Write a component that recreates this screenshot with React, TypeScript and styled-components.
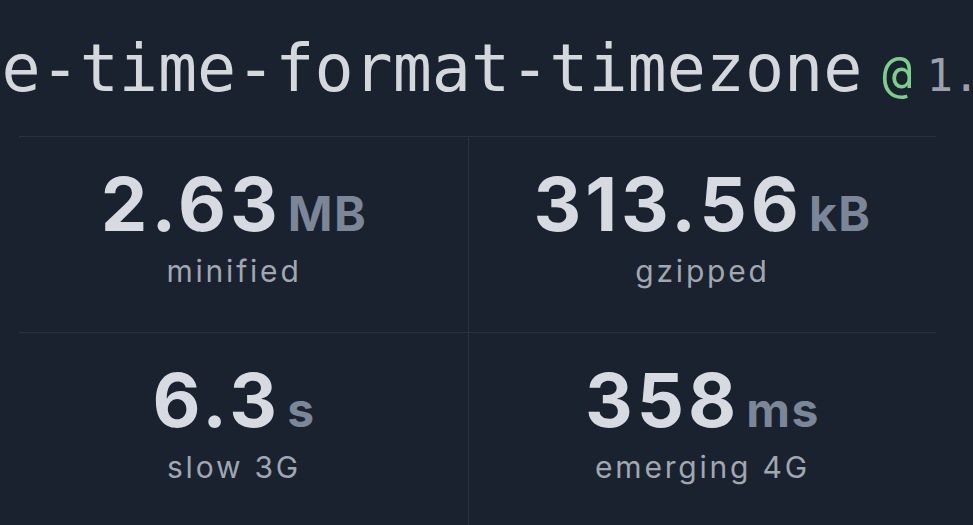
import styled, { createGlobalStyle } from "styled-components";

const GlobalStyle = createGlobalStyle`
  html, body {
    margin: 0;
    padding: 0;
    width: 973px;
    height: 525px;
    overflow: hidden;
    background: #19222e;
  }
`;

const stats = [
  [
    { value: "2.63", unit: "MB", label: "minified" },
    { value: "313.56", unit: "kB", label: "gzipped" },
  ],
  [
    { value: "6.3", unit: "s", label: "slow 3G" },
    { value: "358", unit: "ms", label: "emerging 4G" },
  ],
];

const App = () => {
  return (
    <>
      <GlobalStyle />
      <Page>
        <Title>
          <PackageName>date-time-format-timezone</PackageName>
          <At>@</At>
          <Version>1.0.22</Version>
        </Title>
        <Stats>
          {stats.map((row, i) => (
            <StatRow key={i}>
              {row.map((s, j) => (
                <StatCell key={s.label} $first={j === 0}>
                  <Value>
                    {s.value}
                    <Unit>{s.unit}</Unit>
                  </Value>
                  <Label>{s.label}</Label>
                </StatCell>
              ))}
            </StatRow>
          ))}
        </Stats>
      </Page>
    </>
  );
};

export default App;

const Page = styled.div`
  width: 973px;
  height: 525px;
  background: #19222e;
  overflow: hidden;
`;

const Title = styled.div`
  display: flex;
  align-items: baseline;
  white-space: nowrap;
  margin-left: -116px;
  padding-top: 36px;
  height: 67px;
  font-family: "DejaVu Sans Mono", monospace;
  line-height: 1;
`;

const PackageName = styled.span`
  font-size: 65px;
  color: #d4d8dd;
`;

const At = styled.span`
  font-size: 50px;
  color: #7dce8a;
  margin-left: 20px;
`;

const Version = styled.span`
  font-size: 44px;
  color: #9aa1ab;
  margin-left: 14px;
`;

const Stats = styled.div`
  margin-top: 33px;
  width: 936px;
`;

const StatRow = styled.div`
  display: grid;
  grid-template-columns: 449px 468px;
  margin-left: 19px;
  height: 195px;
  border-top: 1px solid #29333f;
`;

const StatCell = styled.div<{ $first?: boolean }>`
  display: flex;
  flex-direction: column;
  align-items: center;
  margin-left: ${(p) => (p.$first ? "-19px" : "0")};
  border-left: ${(p) => (p.$first ? "none" : "1px solid #29333f")};
  padding-top: 30px;
  font-family: Inter, "Noto Sans", sans-serif;
`;

const Value = styled.div`
  font-size: 74px;
  font-weight: 700;
  line-height: 1;
  color: #d7dae0;
  letter-spacing: 4px;
`;

const Unit = styled.span`
  font-size: 48px;
  font-weight: 700;
  color: #7b8698;
  margin-left: 6px;
  letter-spacing: 1.5px;
`;

const Label = styled.div`
  margin-top: 15px;
  font-size: 30px;
  line-height: 1;
  color: #a0a7b1;
  letter-spacing: 2.8px;
`;
